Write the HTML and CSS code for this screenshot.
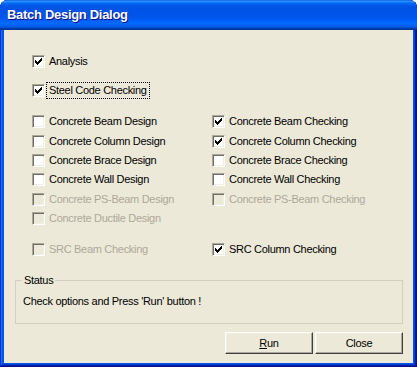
FILE: index.html
```html
<!DOCTYPE html>
<html>
    <head>
<meta name="viewport" content="width=device-width, initial-scale=1.0">
        <title>Batch Design Dialog</title>
        <link rel="stylesheet" href="styles.css">
    </head>
    <body>
        <svg width="0" height="0" class="defs">
            <symbol id="chk" viewBox="0 0 7 7">
                <path d="M0 2h1v3H0zM1 3h1v3H1zM2 4h1v3H2zM3 3h1v3H3zM4 2h1v3H4zM5 1h1v3H5zM6 0h1v3H6z"/>
            </symbol>
        </svg>
        <div class="window">
            <div class="title-bar"><span class="title">Batch Design Dialog</span></div>
            <div class="client">
                <div class="row first">
                    <span class="box"><svg class="tick" width="7" height="7"><use href="#chk"/></svg></span>
                    <span class="label">Analysis</span>
                </div>
                <div class="row second">
                    <span class="box"><svg class="tick" width="7" height="7"><use href="#chk"/></svg></span>
                    <span class="label focus">Steel Code Checking</span>
                </div>

                <div class="grid">
                    <div class="row"><span class="box"></span><span class="label">Concrete Beam Design</span></div>
                    <div class="row"><span class="box"><svg class="tick" width="7" height="7"><use href="#chk"/></svg></span><span class="label">Concrete Beam Checking</span></div>
                    <div class="row"><span class="box"></span><span class="label">Concrete Column Design</span></div>
                    <div class="row"><span class="box"><svg class="tick" width="7" height="7"><use href="#chk"/></svg></span><span class="label">Concrete Column Checking</span></div>
                    <div class="row"><span class="box"></span><span class="label">Concrete Brace Design</span></div>
                    <div class="row"><span class="box"></span><span class="label">Concrete Brace Checking</span></div>
                    <div class="row"><span class="box"></span><span class="label">Concrete Wall Design</span></div>
                    <div class="row"><span class="box"></span><span class="label">Concrete Wall Checking</span></div>
                    <div class="row off"><span class="box"></span><span class="label">Concrete PS-Beam Design</span></div>
                    <div class="row off"><span class="box"></span><span class="label">Concrete PS-Beam Checking</span></div>
                    <div class="row off"><span class="box"></span><span class="label">Concrete Ductile Design</span></div>
                    <div class="row"></div>
                </div>

                <div class="grid src">
                    <div class="row off"><span class="box"></span><span class="label">SRC Beam Checking</span></div>
                    <div class="row"><span class="box"><svg class="tick" width="7" height="7"><use href="#chk"/></svg></span><span class="label">SRC Column Checking</span></div>
                </div>

                <fieldset class="status">
                    <legend>Status</legend>
                    <div class="msg">Check options and Press 'Run' button !</div>
                </fieldset>

                <div class="buttons">
                    <button class="btn"><u>R</u>un</button>
                    <button class="btn">Close</button>
                </div>
            </div>
        </div>
    </body>
</html>
```

FILE: styles.css
```css
body{
    margin:0;
    background:#fff;
    font-family:"Liberation Sans",Arial,sans-serif;
    font-size:11px;
    letter-spacing:-0.3px;
    color:#000;
}
.defs{
    position:absolute;
}
.window{
    width:417px;
    height:367px;
    box-sizing:border-box;
    border-radius:8px 8px 0 0;
    background:#0055e5;
    padding:0 4px 4px 4px;
    box-shadow:inset -1px -1px #00138c,inset 1px 1px #0831d9,inset -2px -2px #001ea0,inset 2px 2px #166aee,inset -3px -3px #003bda,inset 3px 3px #0855dd;
    display:flex;
    flex-direction:column;
}
.title-bar{
    height:30px;
    margin:0 -4px;
    border-radius:8px 8px 0 0;
    background:linear-gradient(180deg,#0058ee 0%,#3593ff 4%,#288eff 6%,#127dff 8%,#036ffc 10%,#0262ee 14%,#0057e5 20%,#0054e3 24%,#0055eb 56%,#005bf5 66%,#026afe 76%,#0062ef 86%,#0052d6 92%,#0040ab 94%,#003092 100%);
    display:flex;
    align-items:center;
    padding-left:7px;
    padding-bottom:2px;
    box-sizing:border-box;
}
.title{
    color:#fff;
    font-weight:bold;
    font-size:13px;
    text-shadow:1px 1px #0f1089;
    letter-spacing:-0.3px;
}
.client{
    flex:1;
    background:#ece9d8;
    padding:22px 10px 0 28px;
    display:flex;
    flex-direction:column;
}
.row{
    height:19.4px;
    display:flex;
    align-items:center;
}
.row.first{
    height:19px;
}
.row.second{
    height:19px;
    margin-top:10px;
}
.box{
    width:13px;
    height:13px;
    box-sizing:border-box;
    border:1px solid;
    border-color:#aca899 #fff #fff #aca899;
    box-shadow:inset 1px 1px #716f64,inset -1px -1px #f1efe2;
    background:#fff;
    flex:none;
    display:flex;
    align-items:center;
    justify-content:center;
    margin-right:4px;
}
.tick{
    fill:#000;
    shape-rendering:crispEdges;
}
.label{
    white-space:nowrap;
    line-height:13px;
}
.focus{
    outline:1px dotted #000;
    outline-offset:1px;
    padding:0 1px;
    margin-left:-1px;
}
.off .box{
    background:#ece9d8;
}
.off .label{
    color:#aca899;
}
.grid{
    display:grid;
    grid-template-columns:180px 180px;
    margin-top:12px;
}
.grid.src{
    margin-top:11px;
}
.status{
    margin:15px 0 0 -17px;
    border:1px solid #d0d0bf;
    padding:8px 8px 15px 7px;
}
.status legend{
    padding:0 2px;
    margin-left:-1px;
    line-height:13px;
}
.msg{
    line-height:13px;
}
.buttons{
    display:flex;
    justify-content:flex-end;
    gap:2px;
    margin-top:8px;
}
.btn{
    width:88px;
    height:22px;
    box-sizing:border-box;
    font-family:"Liberation Sans",Arial,sans-serif;
    font-size:11px;
    letter-spacing:-0.3px;
    color:#000;
    background:#ece9d8;
    border:1px solid;
    border-color:#fff #404040 #404040 #fff;
    box-shadow:inset -1px -1px #aca899,inset 1px 1px #f1efe2;
    padding:0;
}
```
